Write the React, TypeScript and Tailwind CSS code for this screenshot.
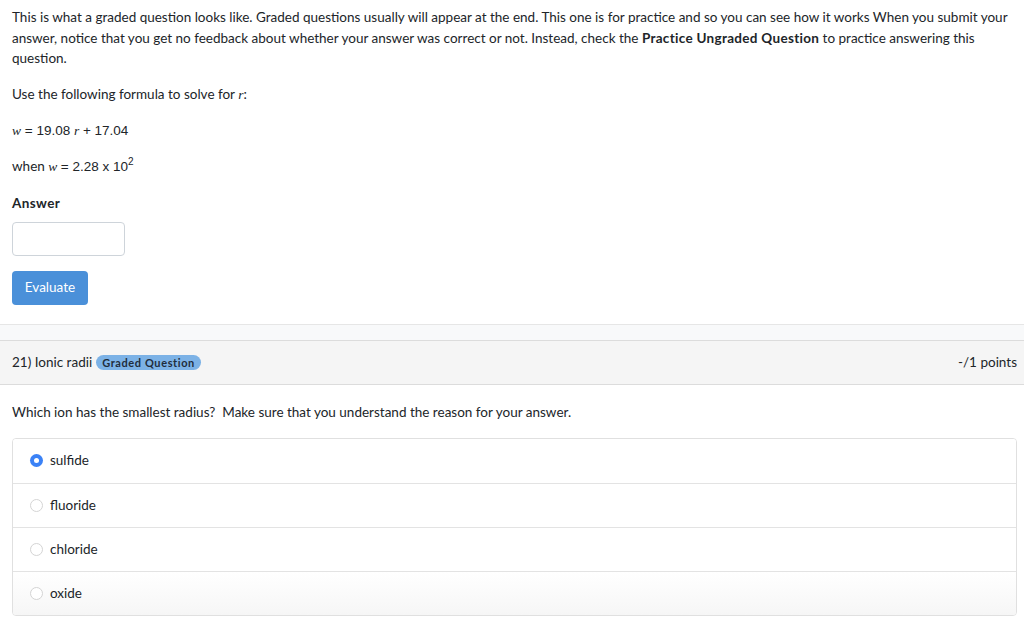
const options = ['sulfide', 'fluoride', 'chloride', 'oxide'];

function Radio({ checked }: { checked: boolean }) {
  if (checked) {
    return (
      <span className="w-[13px] h-[13px] rounded-full bg-[#3b82f6] flex items-center justify-center shrink-0">
        <span className="w-[5px] h-[5px] rounded-full bg-white" />
      </span>
    );
  }
  return <span className="w-[13px] h-[13px] rounded-full border border-[#d4d4d4] bg-white shrink-0" />;
}

export default function App() {
  return (
    <div className="w-[1024px] h-[618px] overflow-hidden bg-white text-[#212529] text-[13.5px] font-['Lato','Noto_Sans',sans-serif]">
      <div className="px-3 pt-[7px]">
        <p className="leading-[20.5px] pr-[4px]">
          This is what a graded question looks like. Graded questions usually will appear at the end. This one is for
          practice and so you can see how it works When you submit your answer, notice that you get no feedback about
          whether your answer was correct or not. Instead, check the{' '}
          <strong className="font-bold tracking-[0.3px]">Practice Ungraded Question</strong> to practice answering this question.
        </p>
        <p className="mt-[15px] leading-[20px]">
          Use the following formula to solve for <i className="font-['Liberation_Serif',serif]">r</i>:
        </p>
        <p className="mt-[16px] leading-[20px] text-[13.5px] font-['Liberation_Sans',sans-serif]">
          <i className="font-['Liberation_Serif',serif]">w</i> = 19.08 <i className="font-['Liberation_Serif',serif]">r</i> + 17.04
        </p>
        <p className="mt-[15px] leading-[20px]">
          when <i className="font-['Liberation_Serif',serif]">w</i>{' '}
          <span className="text-[13.5px] font-['Liberation_Sans',sans-serif]">
            = 2.28 x 10<sup className="text-[10px] top-[-0.6em]">2</sup>
          </span>
        </p>
        <p className="mt-[16px] leading-[20px] font-bold tracking-[0.4px]">Answer</p>
        <input className="mt-[9px] block w-[113px] h-[34px] border border-[#ced4da] rounded-[4px] outline-none" />
        <button className="mt-[15px] block h-[34px] w-[76px] rounded-[4px] bg-[#4a90d9] text-white text-[13.5px]">Evaluate</button>
      </div>
      <div className="mt-[19px] h-[16px] border-t border-[#e6e6e6] bg-[#f8f9fa]" />
      <div className="h-[45px] border-t border-b border-[#dcdcdc] bg-[#f5f5f5] px-3 flex items-center justify-between">
        <div className="flex items-center">
          <span>21) Ionic radii</span>
          <span className="ml-[4px] px-[6px] h-[15px] leading-[15px] rounded-full bg-[#7cb2e6] text-[#1f2d3d] text-[11px] font-bold tracking-[0.6px]">
            Graded Question
          </span>
        </div>
        <span className="mr-[-5px]">-/1 points</span>
      </div>
      <div className="px-3">
        <p className="mt-[17px] leading-[20px]">
          Which ion has the smallest radius?&nbsp; Make sure that you understand the reason for your answer.
        </p>
        <div className="mt-[16px] w-[1005px] border border-[#e0e0e0] rounded-[4px] overflow-hidden">
          {options.map((o, i) => (
            <div
              key={o}
              className={`h-[44px] flex items-center gap-[7px] pl-[17px] ${i > 0 ? 'border-t border-[#e3e3e3]' : ''} ${i === 3 ? 'bg-gradient-to-b from-white to-[#f6f6f6]' : 'bg-white'}`}
            >
              <Radio checked={i === 0} />
              <span>{o}</span>
            </div>
          ))}
        </div>
      </div>
    </div>
  );
}
